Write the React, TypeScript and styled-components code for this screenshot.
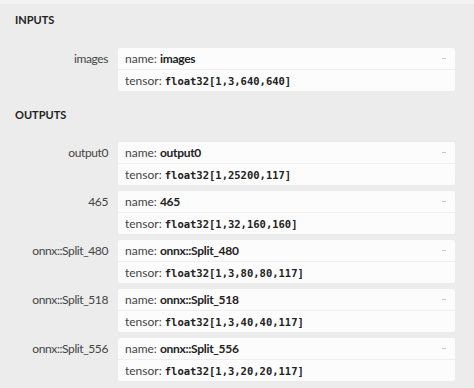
import * as React from 'react';
import styled, { createGlobalStyle } from 'styled-components';

const GlobalStyle = createGlobalStyle`
  html, body {
    margin: 0;
    padding: 0;
    background: #ececec;
  }
`;

const Sidebar = styled.div`
  box-sizing: border-box;
  width: 474px;
  height: 388px;
  overflow: hidden;
  background: #ececec;
  border-top: 4px solid #f2f2f2;
  padding: 6px 19px 0 15px;
  font-family: Lato, "Liberation Sans", sans-serif;
  font-size: 12px;
  color: #333;
`;

const SectionTitle = styled.div<{ $top: number }>`
  margin-top: ${p => p.$top}px;
  height: 20px;
  line-height: 20px;
  font-weight: 700;
  font-size: 11px;
  color: #222;
`;

const List = styled.div<{ $top: number }>`
  display: flex;
  flex-direction: column;
  gap: 6px;
  margin-top: ${p => p.$top}px;
`;

const Row = styled.div`
  display: flex;
  align-items: flex-start;
  gap: 10px;
`;

const Label = styled.div`
  width: 93px;
  flex: none;
  text-align: right;
  height: 21px;
  line-height: 21px;
  color: #444;
  letter-spacing: -0.4px;
  white-space: nowrap;
`;

const Card = styled.div`
  flex: 1;
  background: #fcfcfc;
  border-radius: 2px;
  overflow: hidden;
`;

const Line = styled.div<{ $first?: boolean }>`
  position: relative;
  height: 21px;
  line-height: 21px;
  padding: 0 7px;
  border-top: ${p => (p.$first ? 'none' : '1px solid #efefef')};
  color: #444;
  white-space: nowrap;
`;

const Strong = styled.b`
  font-weight: 700;
  color: #222;
  letter-spacing: -0.3px;
`;

const Code = styled.code`
  font-family: "DejaVu Sans Mono", "Liberation Mono", monospace;
  font-weight: 700;
  font-size: 10.5px;
  color: #222;
`;

const Toggle = styled.span`
  position: absolute;
  right: 9px;
  top: 10px;
  width: 4px;
  height: 1px;
  background: #c8c8c8;
`;

type Arg = { label: string; name: string; type: string };

const inputs: Arg[] = [
  { label: 'images', name: 'images', type: 'float32[1,3,640,640]' },
];

const outputs: Arg[] = [
  { label: 'output0', name: 'output0', type: 'float32[1,25200,117]' },
  { label: '465', name: '465', type: 'float32[1,32,160,160]' },
  { label: 'onnx::Split_480', name: 'onnx::Split_480', type: 'float32[1,3,80,80,117]' },
  { label: 'onnx::Split_518', name: 'onnx::Split_518', type: 'float32[1,3,40,40,117]' },
  { label: 'onnx::Split_556', name: 'onnx::Split_556', type: 'float32[1,3,20,20,117]' },
];

const ArgRow = ({ arg }: { arg: Arg }) => (
  <Row>
    <Label>{arg.label}</Label>
    <Card>
      <Line $first>
        name: <Strong>{arg.name}</Strong>
        <Toggle />
      </Line>
      <Line>
        tensor: <Code>{arg.type}</Code>
      </Line>
    </Card>
  </Row>
);

export default function App() {
  return (
    <>
      <GlobalStyle />
      <Sidebar>
        <SectionTitle $top={0}>INPUTS</SectionTitle>
        <List $top={18}>
          {inputs.map(a => <ArgRow key={a.name} arg={a} />)}
        </List>
        <SectionTitle $top={14}>OUTPUTS</SectionTitle>
        <List $top={17}>
          {outputs.map(a => <ArgRow key={a.name} arg={a} />)}
        </List>
      </Sidebar>
    </>
  );
}
